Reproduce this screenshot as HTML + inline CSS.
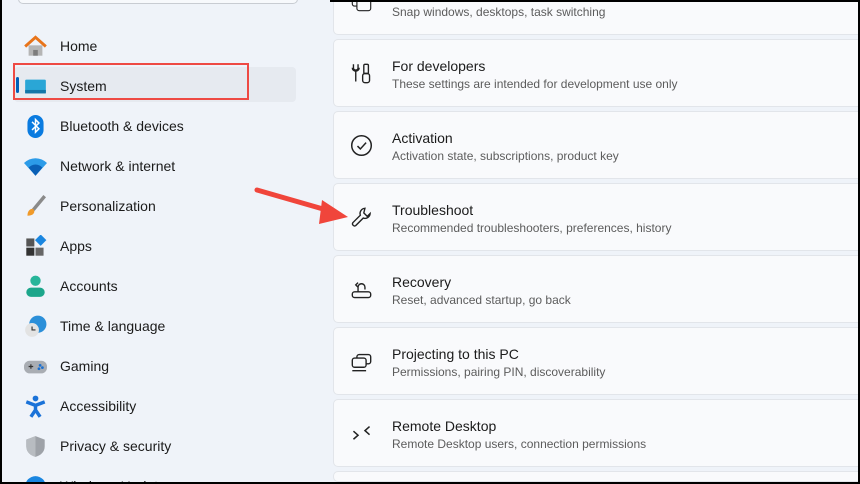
<!DOCTYPE html>
<html><head><style>
*{margin:0;padding:0;box-sizing:border-box}
html,body{width:860px;height:484px;overflow:hidden}
body{background:#000;font-family:"Liberation Sans",sans-serif;position:relative}
.win{position:absolute;left:2px;top:0;width:856px;height:482px;background:#eff3f9;overflow:hidden}
.search{position:absolute;left:16px;top:-20px;width:280px;height:24px;border:1px solid #c8ccd2;border-radius:5px;background:#f7f9fc}
.topbar{position:absolute;left:330px;top:0;width:530px;height:2px;background:#000}
.nav{position:absolute;left:0;width:330px;height:36px}
.nav .ic{position:absolute;left:22px;top:7px;width:23px;height:23px}
.nav .t{position:absolute;left:58px;top:10px;font-size:14px;color:#1b1b1b}
.sel{position:absolute;left:12px;top:67px;width:282px;height:35px;background:#e6eaf0;border-radius:4px}
.bar{position:absolute;left:14px;top:77px;width:3px;height:16px;background:#005fb8;border-radius:2px}
.red{position:absolute;left:11px;top:63px;width:236px;height:37px;border:2px solid #ee4a44}
.card{position:absolute;left:331px;width:540px;height:68px;background:#f9fafc;border:1px solid #e2e5ea;border-radius:5px}
.card .ic{position:absolute;left:16px;top:22px;width:23px;height:23px}
.card .h{position:absolute;left:58px;top:18px;font-size:14px;color:#1b1b1b}
.card .s{position:absolute;left:58px;top:37px;font-size:12px;color:#5c5c5c}
</style></head><body>
<div class="win">
<div class="search"></div>
<div class="sel"></div><div class="bar"></div>
<div class="nav" style="top:28px"><svg class="ic" viewBox="0 0 20 20"><path d="M4 9v9h12V9" fill="#b5b5b5"/><path d="M8 18v-5h4v5" fill="#7d7d7d"/><path d="M1 10L10 2l9 8" stroke="#e8741a" stroke-width="2.5" fill="none"/></svg><span class="t">Home</span></div>
<div class="nav" style="top:68px"><svg class="ic" viewBox="0 0 20 20"><rect x="1" y="4" width="18" height="12" rx="1" fill="#2aa6d6"/><rect x="1" y="13" width="18" height="3" fill="#1576a8"/></svg><span class="t">System</span></div>
<div class="nav" style="top:108px"><svg class="ic" viewBox="0 0 20 20"><rect x="3" y="0" width="14" height="20" rx="7" fill="#0a7be0"/><path d="M7 6l6 6-3 3V4l3 3-6 6" stroke="#fff" stroke-width="1.3" fill="none"/></svg><span class="t">Bluetooth &amp; devices</span></div>
<div class="nav" style="top:148px"><svg class="ic" viewBox="0 0 20 20"><path d="M0 7a14 14 0 0 1 20 0L10 18z" fill="#2c9be8"/><path d="M4 11a8 8 0 0 1 12 0L10 18z" fill="#0a5fb5"/></svg><span class="t">Network &amp; internet</span></div>
<div class="nav" style="top:188px"><svg class="ic" viewBox="0 0 20 20"><path d="M18 1L8 13" stroke="#8a8a8a" stroke-width="3"/><path d="M8 12c-3 0-5 2-5 6 3 0 6-1 6-4z" fill="#f09a2a"/></svg><span class="t">Personalization</span></div>
<div class="nav" style="top:228px"><svg class="ic" viewBox="0 0 20 20"><rect x="2" y="3" width="7" height="7" fill="#555"/><rect x="2" y="11" width="7" height="7" fill="#333"/><rect x="10" y="11" width="7" height="7" fill="#666"/><rect x="11" y="1" width="7" height="7" fill="#1a86e0" transform="rotate(45 14.5 4.5)"/></svg><span class="t">Apps</span></div>
<div class="nav" style="top:268px"><svg class="ic" viewBox="0 0 20 20"><circle cx="10" cy="5" r="4.5" fill="#27b59a"/><path d="M2 15a4 4 0 0 1 4-4h8a4 4 0 0 1 4 4v0a4 4 0 0 1-4 4H6a4 4 0 0 1-4-4z" fill="#1ca68b"/></svg><span class="t">Accounts</span></div>
<div class="nav" style="top:308px"><svg class="ic" viewBox="0 0 20 20"><circle cx="12" cy="8" r="7.5" fill="#2b8fd9"/><circle cx="7" cy="13" r="6" fill="#e3e3e3"/><path d="M7 10v3h3" stroke="#333" fill="none"/></svg><span class="t">Time &amp; language</span></div>
<div class="nav" style="top:348px"><svg class="ic" viewBox="0 0 20 20"><rect x="0" y="5" width="20" height="11" rx="5" fill="#a9adb3"/><path d="M4 10h4M6 8v4" stroke="#333"/><circle cx="14" cy="9" r="1.2" fill="#1a6fd0"/><circle cx="13" cy="12" r="1.2" fill="#1a6fd0"/><circle cx="16" cy="11" r="1.2" fill="#1a6fd0"/></svg><span class="t">Gaming</span></div>
<div class="nav" style="top:388px"><svg class="ic" viewBox="0 0 20 20"><circle cx="10" cy="3" r="2.5" fill="#1a72d8"/><path d="M2 6l8 3 8-3M10 9v4l-4 6M10 13l4 6" stroke="#1a72d8" stroke-width="3" fill="none"/></svg><span class="t">Accessibility</span></div>
<div class="nav" style="top:428px"><svg class="ic" viewBox="0 0 20 20"><path d="M10 1l8 3v6c0 5-4 8-8 9-4-1-8-4-8-9V4z" fill="#9ea2a8"/><path d="M10 1v18c-4-1-8-4-8-9V4z" fill="#b8bcc1"/></svg><span class="t">Privacy &amp; security</span></div>
<div class="nav" style="top:468px;height:14px;overflow:hidden"><svg class="ic" viewBox="0 0 20 20"><circle cx="10" cy="10" r="9" fill="#1a86e0"/></svg><span class="t">Windows Update</span></div>
<div class="red"></div>

<div class="card" style="top:-33px"><svg class="ic" viewBox="0 0 20 20"><rect x="2" y="4" width="12" height="10" rx="2" stroke="#222" fill="none"/><rect x="6" y="8" width="12" height="10" rx="2" stroke="#222" fill="#f9fafc"/></svg><span class="h">Multitasking</span><span class="s">Snap windows, desktops, task switching</span></div>
<div class="card" style="top:39px"><svg class="ic" viewBox="0 0 20 20" fill="none" stroke="#222" stroke-width="1.2"><path d="M3 2v3a2 2 0 0 0 4 0V2M5 7v10M2 5a3 3 0 0 0 6 0"/><rect x="12" y="2" width="4" height="8" rx="1"/><rect x="11" y="10" width="6" height="8" rx="2"/></svg><span class="h">For developers</span><span class="s">These settings are intended for development use only</span></div>
<div class="card" style="top:111px"><svg class="ic" viewBox="0 0 20 20" fill="none" stroke="#222" stroke-width="1.3"><circle cx="10" cy="10" r="8.5"/><path d="M6.5 10.5l2.5 2.5 5-5.5"/></svg><span class="h">Activation</span><span class="s">Activation state, subscriptions, product key</span></div>
<div class="card" style="top:183px"><svg class="ic" viewBox="0 0 20 20" fill="none" stroke="#222" stroke-width="1.2"><path d="M13 2a4.5 4.5 0 0 0-4 6L2.5 14.5a1.8 1.8 0 0 0 2.5 2.5L11.5 10.5a4.5 4.5 0 0 0 6-4l-2.5 2.5-3-3z"/></svg><span class="h">Troubleshoot</span><span class="s">Recommended troubleshooters, preferences, history</span></div>
<div class="card" style="top:255px"><svg class="ic" viewBox="0 0 20 20" fill="none" stroke="#222" stroke-width="1.2"><rect x="2" y="12" width="16" height="5" rx="2"/><path d="M7 12V8a3 3 0 0 1 6 0v2M7 4l-2 2 2 2"/></svg><span class="h">Recovery</span><span class="s">Reset, advanced startup, go back</span></div>
<div class="card" style="top:327px"><svg class="ic" viewBox="0 0 20 20" fill="none" stroke="#222" stroke-width="1.2"><rect x="6" y="4" width="12" height="8" rx="2"/><rect x="2" y="7" width="12" height="8" rx="2" fill="#f9fafc"/><path d="M2 18h12"/></svg><span class="h">Projecting to this PC</span><span class="s">Permissions, pairing PIN, discoverability</span></div>
<div class="card" style="top:399px"><svg class="ic" viewBox="0 0 20 20" fill="none" stroke="#222" stroke-width="1.3"><path d="M3 8l4 3.5-4 3.5M17 4l-4 3.5 4 3.5"/></svg><span class="h">Remote Desktop</span><span class="s">Remote Desktop users, connection permissions</span></div>
<div class="card" style="top:471px;height:11px"></div>

<svg style="position:absolute;left:0;top:0" width="856" height="482"><path d="M255 190L328 211" stroke="#f0453b" stroke-width="5" stroke-linecap="round"/><path d="M346 217L320 200L317 224z" fill="#f0453b"/></svg>
</div>
<div class="topbar"></div>
</body></html>
